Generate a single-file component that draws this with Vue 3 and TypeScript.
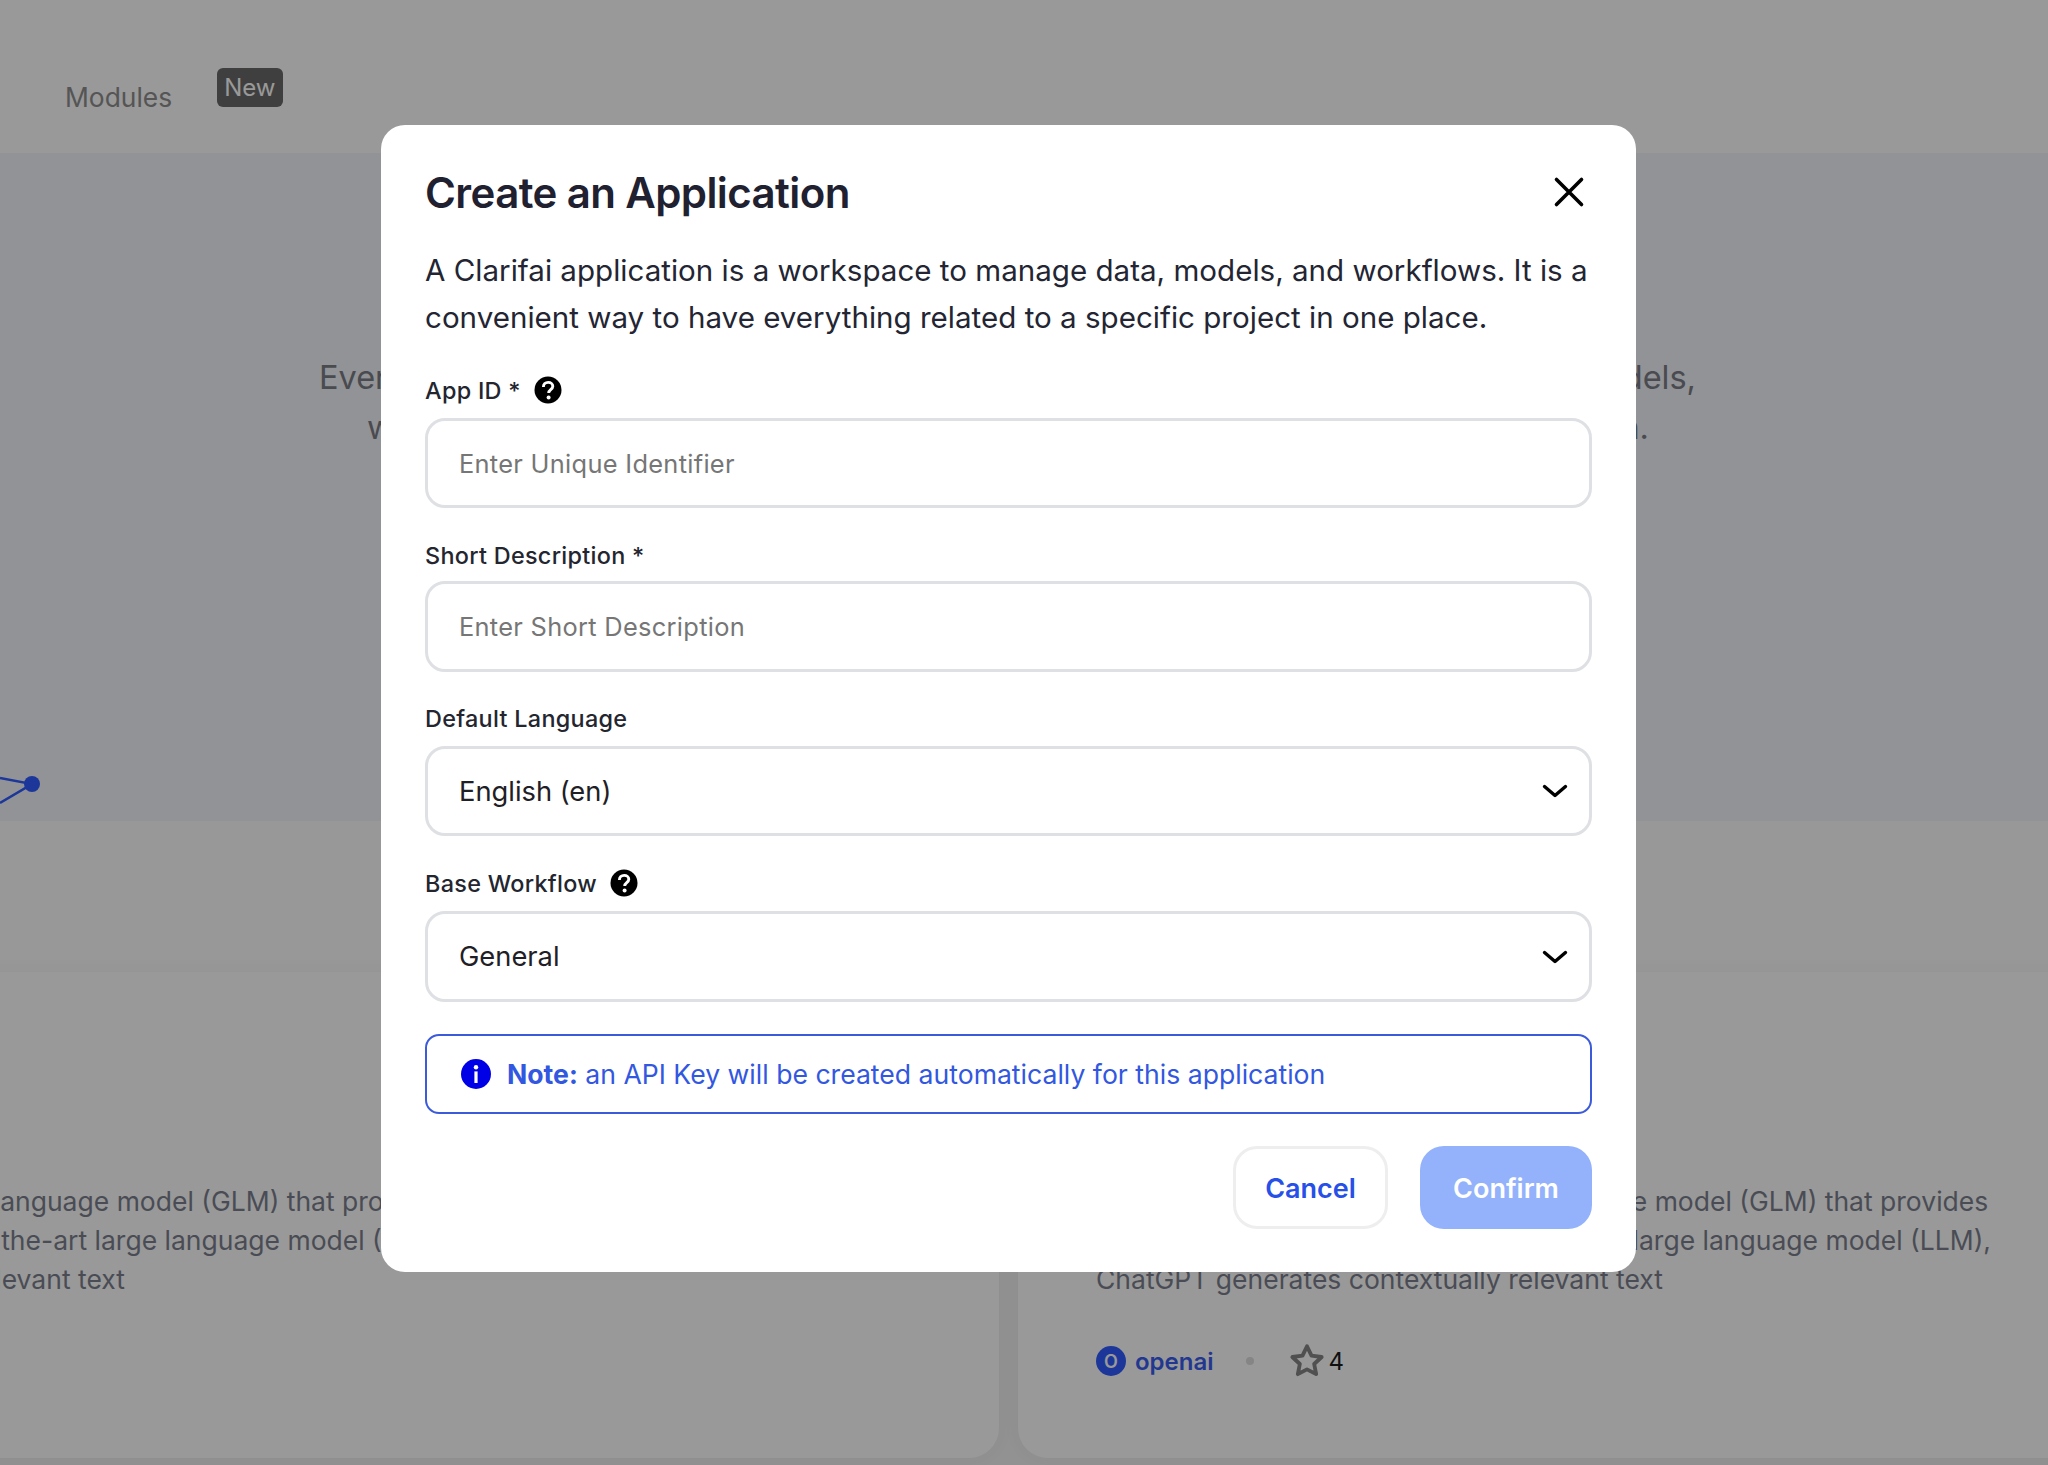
<script setup lang="ts">
interface Field {
  label: string
  help: boolean
  placeholder?: string
  value?: string
}

const fields: Field[] = [
  { label: 'App ID *', help: true, placeholder: 'Enter Unique Identifier' },
  { label: 'Short Description *', help: false, placeholder: 'Enter Short Description' },
  { label: 'Default Language', help: false, value: 'English (en)' },
  { label: 'Base Workflow', help: true, value: 'General' }
]
</script>

<template>
  <div class="page">
    <header class="topbar">
      <span class="nav-link">Modules</span>
      <span class="badge">New</span>
    </header>

    <section class="hero">
      <svg class="graph" width="40" height="50" viewBox="0 0 40 50" aria-hidden="true">
        <path d="M0 10 L32 16 L0 35" fill="none" stroke="#2f5dff" stroke-width="2.5" />
        <circle cx="32" cy="16" r="8" fill="#2f5dff" />
      </svg>
      <div class="hero-text">
        <p class="hero-line"><span>Ever</span><span>dels,</span></p>
        <p class="hero-line second"><span>w</span><span>n.</span></p>
      </div>
    </section>

    <div class="spacer"></div>

    <section class="cards">
      <article v-for="n in 2" :key="n" class="card">
        <p class="card-text">
          ChatGPT is a powerful, generative language model (GLM) that provides<br />
          fast and precise text. As a state-of-the-art large language model (LLM),<br />
          ChatGPT generates contextually relevant text
        </p>
        <div class="card-meta">
          <span class="avatar">O</span>
          <span class="owner">openai</span>
          <span class="sep"></span>
          <svg class="star" width="40" height="40" viewBox="0 0 24 24" aria-hidden="true">
            <path d="M12 3.2l2.7 5.6 6.1.8-4.5 4.2 1.2 6.1L12 17l-5.5 2.9 1.2-6.1-4.5-4.2 6.1-.8z" fill="none" stroke="#858585" stroke-width="2.3" stroke-linejoin="round" />
          </svg>
          <span class="count">4</span>
        </div>
      </article>
    </section>

    <div class="scrim">
      <div class="modal" role="dialog" aria-label="Create an Application">
        <div class="modal-head">
          <h2 class="title">Create an Application</h2>
          <svg class="close" width="32" height="32" viewBox="0 0 32 32" aria-label="Close">
            <path d="M3.5 3.5 L28.5 28.5 M28.5 3.5 L3.5 28.5" stroke="#000" stroke-width="3.6" stroke-linecap="round" />
          </svg>
        </div>
        <p class="intro">
          A Clarifai application is a workspace to manage data, models, and workflows. It is a convenient way to have everything related to a specific project in one place.
        </p>

        <div class="form">
          <div v-for="field in fields" :key="field.label" class="field">
            <div class="label-row">
              <label class="label">{{ field.label }}</label>
              <svg v-if="field.help" class="help" width="28" height="28" viewBox="0 0 28 28" aria-hidden="true">
                <circle cx="14" cy="14" r="13.5" fill="#000" />
                <path d="M9.4 11c0-2.8 2-4.6 4.8-4.6 2.7 0 4.6 1.6 4.6 3.9 0 3.3-4.1 3.4-4.1 6.6" fill="none" stroke="#fff" stroke-width="2.9" />
                <circle cx="14.6" cy="21.4" r="2" fill="#fff" />
              </svg>
            </div>
            <div class="control">
              <span v-if="field.placeholder" class="placeholder">{{ field.placeholder }}</span>
              <span v-else class="value">{{ field.value }}</span>
              <svg v-if="field.value" width="26" height="16" viewBox="0 0 26 16" aria-hidden="true">
                <path d="M2.5 3.5 L13 12.5 L23.5 3.5" fill="none" stroke="#000" stroke-width="3.4" stroke-linecap="round" stroke-linejoin="round" />
              </svg>
            </div>
          </div>
        </div>

        <div class="note">
          <svg width="30" height="30" viewBox="0 0 30 30" aria-hidden="true">
            <circle cx="15" cy="15" r="15" fill="#0000e6" />
            <circle cx="15" cy="8.2" r="2.2" fill="#fff" />
            <rect x="13.4" y="12.4" width="3.2" height="11.6" fill="#fff" />
          </svg>
          <span><strong>Note:</strong> an API Key will be created automatically for this application</span>
        </div>

        <div class="actions">
          <button class="btn cancel" type="button">Cancel</button>
          <button class="btn confirm" type="button">Confirm</button>
        </div>
      </div>
    </div>
  </div>
</template>

<style>
html, body { margin: 0; background: #fff; overflow: hidden; }
</style>

<style scoped>
.page {
  position: relative;
  width: 2048px;
  height: 1465px;
  overflow: hidden;
  background: #fff;
  font-family: Inter, "Liberation Sans", sans-serif;
}
.topbar {
  height: 153px;
  box-sizing: border-box;
  display: flex;
  align-items: flex-start;
  padding: 68px 0 0 65px;
  gap: 45px;
}
.nav-link { font-size: 26.4px; line-height: 58px; color: #8e8e8e; }
.badge {
  background: #696969;
  color: #fff;
  font-size: 24px;
  line-height: 39px;
  padding: 0 8px 0 7px;
  border-radius: 6px;
}
.hero {
  position: relative;
  height: 668px;
  background: #f3f5fa;
  box-sizing: border-box;
  padding-top: 200px;
}
.graph { position: absolute; left: 0; top: 615px; }
.hero-text { width: 1377px; margin-left: 319px; }
.hero-line {
  display: flex;
  justify-content: space-between;
  margin: 0;
  font-size: 32.5px;
  line-height: 50px;
  color: #7b7d85;
}
.hero-line.second { width: 1282px; margin-left: 48px; }
.spacer { height: 151px; background: #fdfdfd; }
.cards {
  display: grid;
  grid-template-columns: 1519px 1519px;
  gap: 19px;
  margin-left: -520px;
  height: 493px;
  background: #f3f3f3;
}
.card {
  height: 486px;
  box-sizing: border-box;
  background: #fff;
  border-radius: 0 0 30px 30px;
  padding: 0 78px;
  box-shadow: 0 0 20px rgba(0, 0, 0, 0.035);
}
.card-text {
  margin: 0;
  padding-top: 210px;
  font-size: 26.5px;
  line-height: 39px;
  color: #7c7f8e;
  white-space: nowrap;
}
.card-meta { display: flex; align-items: center; margin-top: 42px; height: 40px; }
.avatar {
  width: 30px;
  height: 30px;
  border-radius: 50%;
  background: #2f5dff;
  color: #fff;
  font-size: 18px;
  font-weight: 600;
  display: flex;
  align-items: center;
  justify-content: center;
}
.owner { margin-left: 9px; font-size: 24px; font-weight: 600; color: #3a5ef0; }
.sep { width: 8px; height: 8px; border-radius: 50%; background: #dedede; margin: 0 32px; }
.star { margin-left: 1px; }
.count { margin-left: 2px; font-size: 24px; color: #1c1c1c; }
.scrim {
  position: absolute;
  inset: 0;
  background: rgba(0, 0, 0, 0.4);
}
.modal {
  position: absolute;
  left: 381px;
  top: 125px;
  width: 1255px;
  height: 1147px;
  box-sizing: border-box;
  padding: 41px 44px 43px;
  background: #fff;
  border-radius: 24px;
  display: flex;
  flex-direction: column;
}
.modal-head { display: flex; align-items: center; justify-content: space-between; height: 54px; flex-shrink: 0; }
.close { margin: -2px 7px 0 0; }
.title { margin: 0; font-size: 42px; line-height: 54px; font-weight: 600; color: #1f2130; letter-spacing: -0.6px; }
.intro { margin: 27px 0 0; font-size: 29.57px; line-height: 47px; color: #232533; flex-shrink: 0; }
.form { display: flex; flex-direction: column; gap: 27px; margin-top: 29px; flex-shrink: 0; }
.field { display: flex; flex-direction: column; }
.label-row { display: flex; align-items: center; gap: 13px; height: 40px; margin-bottom: 8px; }
.field:nth-child(2) .label-row { margin-bottom: 6px; }
.field:nth-child(3) { margin-top: -1px; }
.field:nth-child(even) .control { height: 91px; }
.label { font-size: 23.4px; font-weight: 500; color: #23252f; letter-spacing: 0.3px; }
.control {
  height: 90px;
  box-sizing: border-box;
  border: 3px solid #dee0e4;
  border-radius: 20px;
  padding: 0 21px 0 31px;
  display: flex;
  align-items: center;
  justify-content: space-between;
}
.placeholder { font-size: 25.4px; color: #767676; letter-spacing: 0.3px; }
.value { font-size: 27.3px; color: #1f2026; }
.note {
  margin-top: 32px;
  height: 80px;
  flex-shrink: 0;
  box-sizing: border-box;
  border: 2px solid #3b5bdb;
  border-radius: 14px;
  padding-left: 34px;
  display: flex;
  align-items: center;
  gap: 16px;
  font-size: 26.6px;
  color: #3257e0;
}
.note strong { font-weight: 700; }
.actions { display: flex; justify-content: flex-end; gap: 32px; margin-top: 32px; flex-shrink: 0; }
.btn {
  height: 83px;
  border-radius: 24px;
  font-family: inherit;
  font-size: 27px;
  font-weight: 600;
  padding-top: 3px;
}
.cancel { width: 155px; background: #fff; border: 3px solid #eeeeee; color: #2650e8; }
.confirm { width: 172px; background: #93b2fb; border: 0; color: #fff; }
</style>
